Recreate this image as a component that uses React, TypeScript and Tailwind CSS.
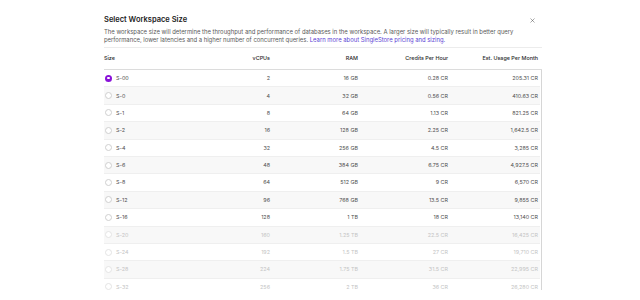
import { X } from "lucide-react"

type Size = {
  name: string
  vcpus: string
  ram: string
  credits: string
  usage: string
  disabled?: boolean
}

const sizes: Size[] = [
  { name: "S-00", vcpus: "2", ram: "16 GB", credits: "0.28 CR", usage: "205.31 CR" },
  { name: "S-0", vcpus: "4", ram: "32 GB", credits: "0.56 CR", usage: "410.63 CR" },
  { name: "S-1", vcpus: "8", ram: "64 GB", credits: "1.13 CR", usage: "821.25 CR" },
  { name: "S-2", vcpus: "16", ram: "128 GB", credits: "2.25 CR", usage: "1,642.5 CR" },
  { name: "S-4", vcpus: "32", ram: "256 GB", credits: "4.5 CR", usage: "3,285 CR" },
  { name: "S-6", vcpus: "48", ram: "384 GB", credits: "6.75 CR", usage: "4,927.5 CR" },
  { name: "S-8", vcpus: "64", ram: "512 GB", credits: "9 CR", usage: "6,570 CR" },
  { name: "S-12", vcpus: "96", ram: "768 GB", credits: "13.5 CR", usage: "9,855 CR" },
  { name: "S-16", vcpus: "128", ram: "1 TB", credits: "18 CR", usage: "13,140 CR" },
  { name: "S-20", vcpus: "160", ram: "1.25 TB", credits: "22.5 CR", usage: "16,425 CR", disabled: true },
  { name: "S-24", vcpus: "192", ram: "1.5 TB", credits: "27 CR", usage: "19,710 CR", disabled: true },
  { name: "S-28", vcpus: "224", ram: "1.75 TB", credits: "31.5 CR", usage: "22,995 CR", disabled: true },
  { name: "S-32", vcpus: "256", ram: "2 TB", credits: "36 CR", usage: "26,280 CR", disabled: true },
]

const cols = "grid grid-cols-[96px_70px_88px_90px_90px] items-center"

export default function App() {
  return (
    <div className="h-[300px] overflow-hidden bg-white font-['Inter','Liberation_Sans',sans-serif]">
      <div className="ml-[104px] w-[438px] pt-[15px]">
        <div className="flex h-[10px] items-center justify-between">
          <h2 className="text-[7.5px] font-semibold leading-[10px] text-[#1c1c1c]">
            Select Workspace Size
          </h2>
          <X className="mr-[6px] h-[7px] w-[7px] text-[#444]" strokeWidth={1.6} />
        </div>
        <p className="mt-[3px] whitespace-nowrap text-[5.9px] leading-[8px] text-[#5a5a5a]">
          The workspace size will determine the throughput and performance of databases in the workspace. A larger size will typically result in better query
          <br />
          performance, lower latencies and a higher number of concurrent queries.{" "}
          <span className="text-[#5b3fd4]">Learn more about SingleStore pricing and sizing.</span>
        </p>
        <div className="mt-[3px] border-b border-[#ececec]" />

        <div className={`${cols} h-[22px] border-b border-[#dcdcdc] text-[5.4px] font-medium text-[#2a2a2a]`}>
          <div>Size</div>
          <div className="text-right">vCPUs</div>
          <div className="text-right">RAM</div>
          <div className="text-right">Credits Per Hour</div>
          <div className="text-right">Est. Usage Per Month</div>
        </div>

        <div className="flex h-[220px] overflow-hidden">
          <div className="w-[436px]">
            {sizes.map((s, i) => (
              <div
                key={s.name}
                className={`${cols} h-[17.4px] border-b border-[#efefef] text-[5.4px] ${
                  i % 2 === 1 ? "bg-[#f8f8f8]" : "bg-white"
                } ${s.disabled ? "text-[#c4c4c4]" : "text-[#4f4f4f]"}`}
              >
                <div className="flex items-center gap-[4px] pl-[1px]">
                  {i === 0 ? (
                    <span className="flex h-[7px] w-[7px] items-center justify-center rounded-full bg-[#8a12d9]">
                      <span className="h-[2.5px] w-[2.5px] rounded-full bg-white" />
                    </span>
                  ) : (
                    <span
                      className={`h-[7px] w-[7px] rounded-full border-[0.6px] bg-white ${
                        s.disabled ? "border-[#e4e4e4]" : "border-[#cfcfcf]"
                      }`}
                    />
                  )}
                  <span>{s.name}</span>
                </div>
                <div className="text-right">{s.vcpus}</div>
                <div className="text-right">{s.ram}</div>
                <div className="text-right">{s.credits}</div>
                <div className="text-right">{s.usage}</div>
              </div>
            ))}
          </div>
          <div className="ml-[1px] h-full w-[1.5px] bg-[#d6d6d6]" />
        </div>
      </div>
    </div>
  )
}
